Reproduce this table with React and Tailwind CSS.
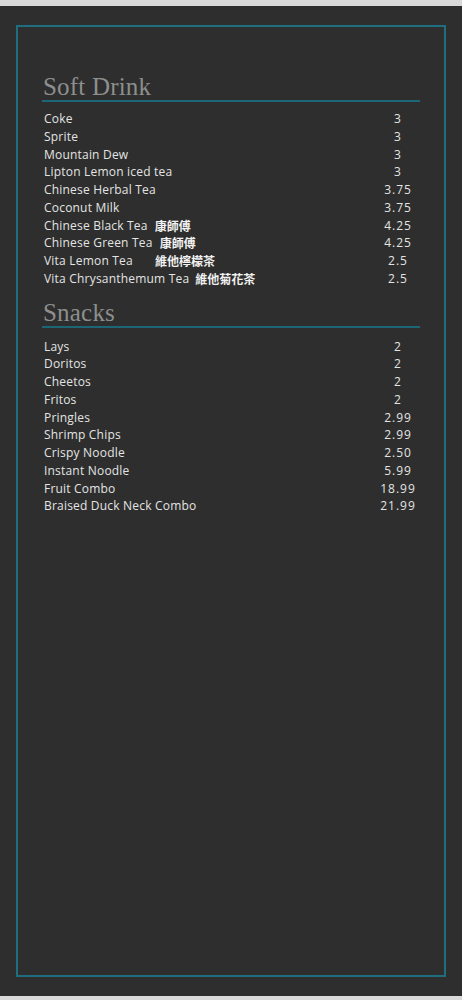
import React from "react";

const drinks = [
  ["Coke", null, "3"],
  ["Sprite", null, "3"],
  ["Mountain Dew", null, "3"],
  ["Lipton Lemon iced tea", null, "3"],
  ["Chinese Herbal Tea", null, "3.75"],
  ["Coconut Milk", null, "3.75"],
  ["Chinese Black Tea", "康師傅", "4.25", "ml-[7px]"],
  ["Chinese Green Tea", "康師傅", "4.25", "ml-[7px]"],
  ["Vita Lemon Tea", "維他檸檬茶", "2.5", "ml-[22px]"],
  ["Vita Chrysanthemum Tea", "維他菊花茶", "2.5", "ml-[6px]"],
];

const snacks = [
  ["Lays", "2"],
  ["Doritos", "2"],
  ["Cheetos", "2"],
  ["Fritos", "2"],
  ["Pringles", "2.99"],
  ["Shrimp Chips", "2.99"],
  ["Crispy Noodle", "2.50"],
  ["Instant Noodle", "5.99"],
  ["Fruit Combo", "18.99"],
  ["Braised Duck Neck Combo", "21.99"],
];

const sans = "font-['Open_Sans',sans-serif]";

function Row({ name, cn, price, cnClass }) {
  return (
    <div className="flex items-center justify-between h-[17.75px] leading-[17.75px]">
      <div className="flex items-center pl-[2px] text-[12px] text-[#e4e4e4]">
        <span className="tracking-[0.2px]">{name}</span>
        {cn && (
          <span
            className={`${cnClass} font-bold text-[12px] text-[#f2f2f2] font-['Noto_Sans_CJK_TC',sans-serif]`}
          >
            {cn}
          </span>
        )}
      </div>
      <span className="w-[44px] text-center text-[12px] tracking-[1px] text-[#e4e4e4]">
        {price}
      </span>
    </div>
  );
}

function Title({ children, className }) {
  return (
    <div
      className={`${className} border-b-2 border-[#1d6676] pb-[2px] pl-[1px] leading-[23px] text-[25px] tracking-[0.2px] text-[#8e8e8e] font-['Liberation_Serif',serif]`}
    >
      {children}
    </div>
  );
}

export default function App() {
  return (
    <div className={`${sans} h-[1000px] w-[462px] bg-[#d9d9d9] pt-[6px]`}>
      <div className="h-[990px] bg-[#2d2e2d] px-[16px] pt-[19px] pb-[19px]">
        <div className="h-full border-2 border-[#1e6e80] px-[24px]">
          <Title className="mt-[48px]">Soft Drink</Title>
          <div className="mt-[8px] flex flex-col">
            {drinks.map(([n, cn, p, c]) => (
              <Row key={n} name={n} cn={cn} price={p} cnClass={c} />
            ))}
          </div>
          <Title className="mt-[13px]">Snacks</Title>
          <div className="mt-[10px] flex flex-col">
            {snacks.map(([n, p]) => (
              <Row key={n} name={n} price={p} />
            ))}
          </div>
        </div>
      </div>
    </div>
  );
}
